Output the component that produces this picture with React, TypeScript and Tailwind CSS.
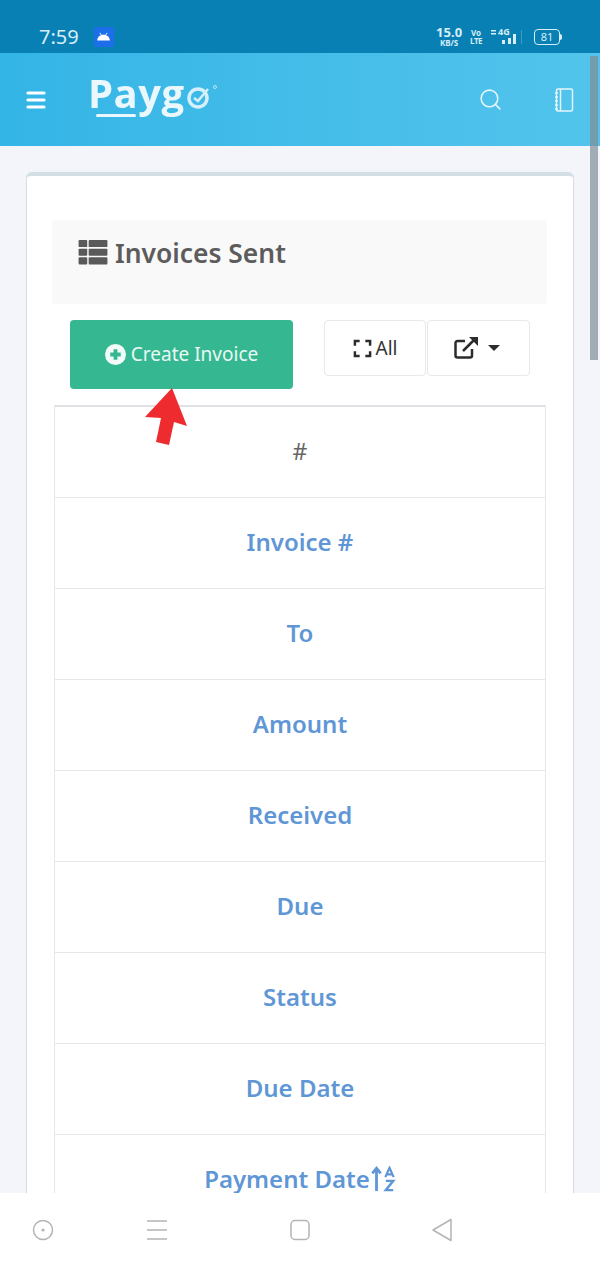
import { Menu, Search } from "lucide-react";

const columns = ["Invoice #", "To", "Amount", "Received", "Due", "Status", "Due Date"];

function StatusBar() {
  return (
    <div className="flex h-[53px] shrink-0 items-center bg-[#0880b4] pl-[39px] pr-[38px] pt-[20px] text-[#d6eef8]">
      <span className="text-[20px] leading-none">7:59</span>
      <span className="ml-[15px] flex h-[20px] w-[20px] items-center justify-center rounded-[3px] bg-[#1c6fe8]">
        <svg viewBox="0 0 16 10" className="h-[9px] w-[15px]" fill="#fff">
          <path d="M1 9.500C1 5.500 4 3 8 3s7 2.500 7 6.500z" />
          <path d="M4 1l2 3M12 1l-2 3" stroke="#fff" strokeWidth="1" />
        </svg>
      </span>
      <div className="ml-auto flex items-center">
        <div className="flex flex-col items-center font-bold">
          <span className="text-[13px] leading-[13px]">15.0</span>
          <span className="text-[8px] leading-[8px]">KB/S</span>
        </div>
        <div className="ml-[8px] flex flex-col items-center text-[8px] font-bold leading-[8px]">
          <span>Vo</span>
          <span className="tracking-[-0.5px]">LTE</span>
        </div>
        <div className="relative ml-[9px] h-[20px] w-[26px]">
          <svg viewBox="0 0 26 20" className="h-[20px] w-[26px]" fill="#d6eef8">
            <rect x="0" y="3" width="5" height="1.500" />
            <rect x="0" y="6" width="5" height="1.500" />
            <rect x="11" y="13" width="3" height="4" />
            <rect x="17" y="11" width="3" height="6" />
            <rect x="22" y="7" width="3" height="10" />
          </svg>
          <span className="absolute left-[7px] top-[0px] text-[9px] font-bold leading-[10px]">4G</span>
        </div>
        <span className="ml-[4px] h-[14px] w-px bg-[#3d9ac4]" />
        <div className="ml-[12px] flex h-[16px] w-[26px] items-center justify-center rounded-[4px] border border-[#d6eef8] text-[11px] leading-none">
          81
        </div>
        <span className="h-[6px] w-[2px] rounded-r bg-[#d6eef8]" />
      </div>
    </div>
  );
}

function Header() {
  return (
    <div className="flex h-[93px] shrink-0 items-center bg-gradient-to-r from-[#33b5e6] to-[#52c4ec] pl-[24px] pr-[26px] text-white">
      <Menu className="h-[24px] w-[24px]" strokeWidth={3.2} />
      <div className="relative ml-[40px] mt-[-14px] flex items-center blur-[0.7px]">
        <span className="font-['Open_Sans',sans-serif] text-[40px] font-bold leading-none tracking-[0.5px] text-[#eaf8fd]">
          Payg
        </span>
        <svg viewBox="0 0 32 26" className="ml-[1px] mt-[6px] h-[26px] w-[32px]" fill="none" stroke="#d5f0fa" strokeWidth="3.500">
          <circle cx="12" cy="15" r="9" />
          <path d="M8 15l4 3 10-12" strokeWidth="2.500" />
          <circle cx="29" cy="4" r="1.500" strokeWidth="0.800" />
        </svg>
        <span className="absolute bottom-[-4px] left-[8px] h-[3px] w-[40px] rounded bg-[#eaf8fd]" />
      </div>
      <Search className="ml-auto h-[25px] w-[25px] text-[#e4f6fc]" strokeWidth={1.5} />
      <svg viewBox="0 0 20 24" className="ml-[51px] h-[24px] w-[20px]" fill="none" stroke="#e4f6fc" strokeWidth="1.500">
        <rect x="2.500" y="1" width="16" height="22" rx="1.500" />
        <path d="M6.500 1v22M1 5h3M1 9h3M1 13h3M1 17h3M1 21h3" />
      </svg>
    </div>
  );
}

function BottomNav() {
  return (
    <div className="relative z-10 grid h-[74px] shrink-0 grid-cols-[85px_143px_143px_143px_86px] items-center bg-white">
      <svg viewBox="0 0 22 22" className="ml-[32px] h-[22px] w-[22px]" fill="none" stroke="#b4b4b4" strokeWidth="1.500">
        <circle cx="11" cy="11" r="9.500" />
        <circle cx="11" cy="11" r="1.600" fill="#b4b4b4" stroke="none" />
      </svg>
      <svg viewBox="0 0 22 22" className="ml-[61px] h-[22px] w-[22px]" fill="none" stroke="#b4b4b4" strokeWidth="1.500">
        <path d="M1 2h20M1 11h20M1 20h20" />
      </svg>
      <svg viewBox="0 0 22 22" className="ml-[61px] h-[22px] w-[22px]" fill="none" stroke="#b4b4b4" strokeWidth="1.500">
        <rect x="2" y="1.500" width="18" height="19" rx="4" />
      </svg>
      <svg viewBox="0 0 22 24" className="ml-[60px] h-[24px] w-[22px]" fill="none" stroke="#b4b4b4" strokeWidth="1.500" strokeLinejoin="round">
        <path d="M20 1.500v21L2 12z" />
      </svg>
    </div>
  );
}

export default function App() {
  return (
    <div className="relative flex h-[1267px] w-[600px] flex-col overflow-hidden bg-[#f3f5fb] font-['Noto_Sans',sans-serif]">
      <StatusBar />
      <Header />

      <main className="min-h-0 flex-1 overflow-hidden pl-[26px] pt-[26px]">
        <div className="w-[548px] rounded-t-[6px] border-x border-x-[#d9dce0] border-t-[4px] border-t-[#d3dfe4] bg-white pl-[25px] pr-[26px] pt-[44px]">
          <div className="flex h-[84px] w-[495px] items-start rounded-[4px] bg-[#f9f9f9] pl-[26px] pt-[15px]">
            <svg viewBox="0 0 30 26" className="mt-[5px] h-[25px] w-[30px]" fill="#5a5a5a">
              <rect x="0" y="0" width="9" height="7.400" rx="1" />
              <rect x="10.500" y="0" width="19.500" height="7.400" rx="1" />
              <rect x="0" y="9" width="9" height="7.400" rx="1" />
              <rect x="10.500" y="9" width="19.500" height="7.400" rx="1" />
              <rect x="0" y="18" width="9" height="7.400" rx="1" />
              <rect x="10.500" y="18" width="19.500" height="7.400" rx="1" />
            </svg>
            <h1 className="ml-[7px] text-[26.400px] font-semibold leading-[36px] text-[#5c5c5c]">Invoices Sent</h1>
          </div>

          <div className="mt-[16px] flex items-start pl-[18px]">
            <button className="flex h-[69px] w-[223px] items-center justify-center rounded-[4px] bg-[#35b892] text-[19px] text-[#e9f8f3]">
              <svg viewBox="0 0 22 22" className="mr-[5px] h-[21px] w-[21px]">
                <circle cx="11" cy="11" r="11" fill="#f2fbf8" />
                <path d="M11 5.500v11M5.500 11h11" stroke="#35b892" strokeWidth="4" />
              </svg>
              Create Invoice
            </button>
            <button className="ml-[31px] flex h-[56px] w-[102px] items-center justify-center rounded-[4px] border border-[#e9e9e9] bg-white text-[19px] text-[#333]">
              <svg viewBox="0 0 20 20" className="mr-[4px] h-[19px] w-[19px]" fill="none" stroke="#2c2c2c" strokeWidth="2.600">
                <path d="M2 7V2h5M13 2h5v5M18 13v5h-5M7 18H2v-5" />
              </svg>
              All
            </button>
            <button className="ml-[1px] flex h-[56px] w-[103px] items-center justify-center rounded-[4px] border border-[#e9e9e9] bg-white text-[#2c2c2c]">
              <svg viewBox="0 0 24 22" className="ml-[-3px] h-[22px] w-[24px]" fill="none" stroke="#2c2c2c" strokeWidth="2.500">
                <path d="M11 4H3.500A2 2 0 0 0 1.500 6v12.500a2 2 0 0 0 2 2H16a2 2 0 0 0 2-2V12" />
                <path d="M9 14L20 3" />
                <path d="M15 0h9v9z" fill="#2c2c2c" stroke="none" />
              </svg>
              <span className="ml-[10px] h-0 w-0 border-x-[6px] border-t-[6px] border-x-transparent border-t-[#2c2c2c]" />
            </button>
          </div>

          <div className="ml-[2px] mt-[16px] w-[492px] border-x border-t-2 border-x-[#e5e7ea] border-t-[#dfe1e4] text-center">
            <div className="flex h-[90px] items-center justify-center pb-[2px] text-[23px] text-[#666]">#</div>
            {columns.map((name) => (
              <div
                key={name}
                className="flex h-[91px] items-center justify-center border-t border-[#e5e7ea] pb-[2px] text-[24px] font-semibold text-[#5f97d6]"
              >
                {name}
              </div>
            ))}
            <div className="flex h-[91px] items-center justify-center border-t border-[#e5e7ea] pb-[2px] text-[24px] font-semibold text-[#5f97d6]">
              Payment Date
              <svg viewBox="0 0 26 28" className="h-[26px] w-[26px]" fill="none" stroke="#5f97d6" strokeWidth="3">
                <path d="M6 27V3M1.500 8L6 2.500 10.500 8" />
                <path d="M15.500 12L20 2l4.500 10M17 9h6" strokeWidth="2.400" />
                <path d="M16 16h8l-8 10h8" strokeWidth="2.600" />
              </svg>
            </div>
          </div>
        </div>
      </main>

      <BottomNav />

      {/* annotation arrow and overlay scrollbar */}
      <svg viewBox="0 0 42 58" className="absolute left-[145px] top-[388px] h-[58px] w-[42px]">
        <path d="M27 0L42 38 29 34 24 57 11 54 16 30 0 29z" fill="#ee2b2f" />
      </svg>
      <div className="absolute left-[590px] top-[56px] h-[304px] w-[8px] bg-[#7f8d96]/70" />
    </div>
  );
}
